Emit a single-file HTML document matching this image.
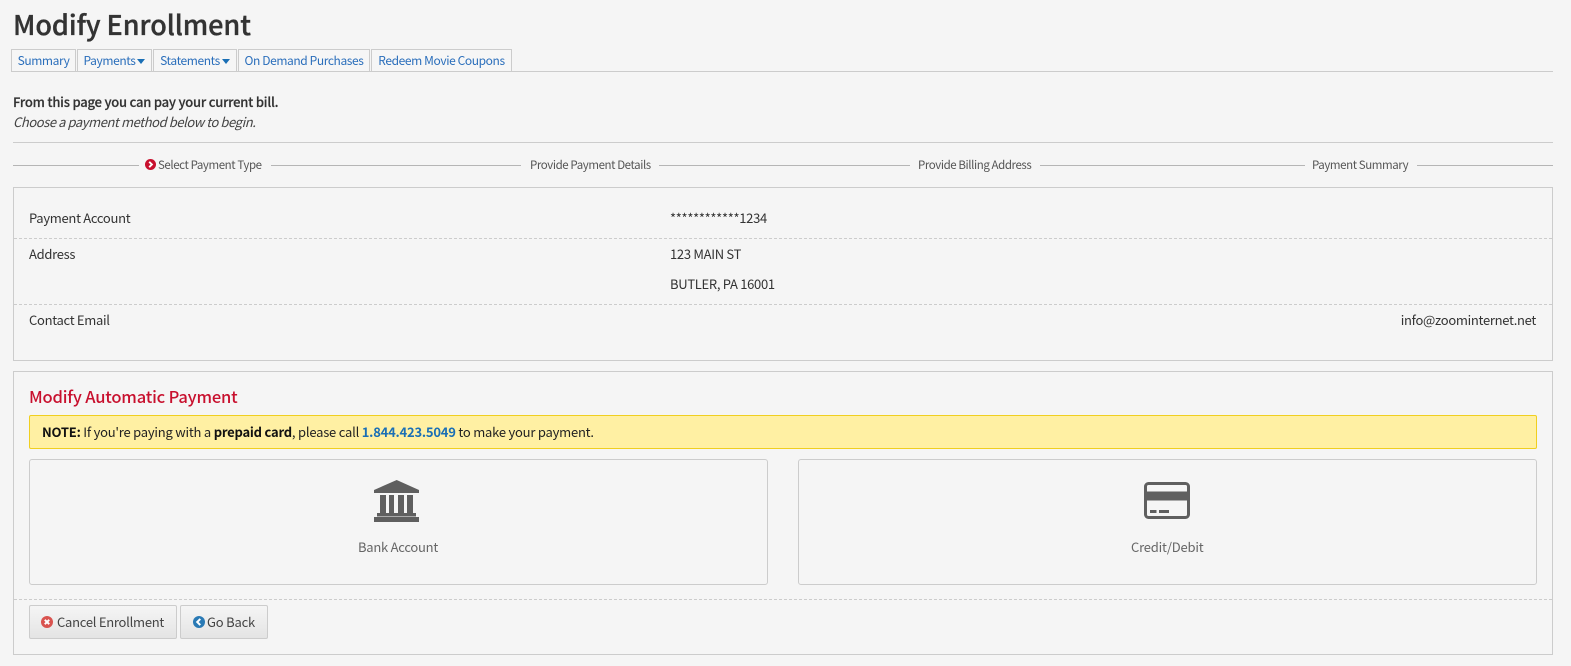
<!DOCTYPE html>
<html>
<head>
<meta charset="utf-8">
<style>
html,body{margin:0;padding:0;background:#f5f5f5;}
body{width:1571px;height:666px;position:relative;overflow:hidden;font-family:"Noto Sans CJK SC","Noto Sans CJK JP","Liberation Sans",sans-serif;color:#333;font-size:13px;letter-spacing:-.3px;}
.t{position:absolute;white-space:nowrap;line-height:20px;}
.b{position:absolute;box-sizing:border-box;}
.tab{position:absolute;top:49px;height:23px;box-sizing:border-box;border:1px solid #ccc;border-bottom:0;background:#f6f6f6;color:#2a6ebb;font-size:12px;letter-spacing:-.4px;line-height:22px;text-align:center;white-space:nowrap;}
.caret{display:inline-block;width:0;height:0;border-left:4.5px solid transparent;border-right:4.5px solid transparent;border-top:5px solid #1a6fb5;vertical-align:1px;margin-left:2px;}
.ln{position:absolute;height:1px;background:#b5b5b5;top:165px;}
.step{position:absolute;top:155px;font-size:11.5px;letter-spacing:-.42px;line-height:20px;color:#555;white-space:nowrap;}
.btn{position:absolute;top:605px;height:34px;box-sizing:border-box;border:1px solid #ccc;border-radius:2px;background:linear-gradient(#f5f5f5,#e4e4e4);color:#444;font-size:13px;letter-spacing:-.26px;line-height:32px;white-space:nowrap;}
.dash{position:absolute;height:0;border-top:1px dashed #ccc;}
.card{position:absolute;top:459px;height:126px;box-sizing:border-box;border:1px solid #ccc;border-radius:3px;}
</style>
</head>
<body>
<div class="t" style="left:13px;top:6px;font-size:27px;letter-spacing:-.05px;line-height:36px;font-weight:500;color:#333;-webkit-text-stroke:.35px #333;">Modify Enrollment</div>

<div class="tab" style="left:11px;width:65px;">Summary</div>
<div class="tab" style="left:77px;width:75px;">Payments<span class="caret"></span></div>
<div class="tab" style="left:153px;width:84px;">Statements<span class="caret"></span></div>
<div class="tab" style="left:238px;width:132px;">On Demand Purchases</div>
<div class="tab" style="left:371px;width:141px;">Redeem Movie Coupons</div>
<div class="b" style="left:11px;top:71px;width:1542px;height:1px;background:#ccc;"></div>

<div class="t" style="left:13px;top:92px;font-size:13px;letter-spacing:-.21px;font-weight:500;-webkit-text-stroke:.2px #333;">From this page you can pay your current bill.</div>
<div class="t" style="left:13px;top:112px;font-size:13px;letter-spacing:-.43px;font-style:italic;color:#444;">Choose a payment method below to begin.</div>
<div class="b" style="left:13px;top:142px;width:1540px;height:1px;background:#ccc;"></div>

<div class="ln" style="left:13px;width:126px;"></div>
<svg style="position:absolute;left:145px;top:159px" width="11" height="11" viewBox="0 0 11 11"><circle cx="5.5" cy="5.5" r="5.5" fill="#c8102e"/><path d="M4.2 2.8 L6.9 5.5 L4.2 8.2" fill="none" stroke="#fff" stroke-width="1.9"/></svg>
<div class="step" style="left:158px;">Select Payment Type</div>
<div class="ln" style="left:271px;width:250px;"></div>
<div class="step" style="left:530px;">Provide Payment Details</div>
<div class="ln" style="left:659px;width:251px;"></div>
<div class="step" style="left:918px;">Provide Billing Address</div>
<div class="ln" style="left:1040px;width:265px;"></div>
<div class="step" style="left:1312px;">Payment Summary</div>
<div class="ln" style="left:1417px;width:136px;"></div>

<div class="b" style="left:13px;top:187px;width:1540px;height:174px;border:1px solid #ccc;"></div>
<div class="t" style="left:29px;top:208px;">Payment Account</div>
<div class="t" style="left:670px;top:208px;">************1234</div>
<div class="dash" style="left:14px;top:238px;width:1538px;"></div>
<div class="t" style="left:29px;top:244px;">Address</div>
<div class="t" style="left:670px;top:244px;">123 MAIN ST</div>
<div class="t" style="left:670px;top:274px;">BUTLER, PA 16001</div>
<div class="dash" style="left:14px;top:304px;width:1538px;"></div>
<div class="t" style="left:29px;top:310px;">Contact Email</div>
<div class="t" style="right:35px;top:310px;">info@zoominternet.net</div>

<div class="b" style="left:13px;top:371px;width:1540px;height:284px;border:1px solid #ccc;"></div>
<div class="t" style="left:29px;top:386px;font-size:16.5px;letter-spacing:-.17px;font-weight:500;color:#c8102e;">Modify Automatic Payment</div>
<div class="b" style="left:29px;top:415px;width:1508px;height:34px;background:#fff0a3;border:1px solid #f0cf20;border-radius:2px;"></div>
<div class="t" style="left:42px;top:422px;font-size:13px;letter-spacing:-.22px;color:#222;"><b style="color:#111">NOTE:</b> If you're paying with a <b style="color:#111">prepaid card</b>, please call <b style="color:#1a6fb5">1.844.423.5049</b> to make your payment.</div>

<div class="card" style="left:29px;width:739px;"></div>
<svg style="position:absolute;left:373px;top:479px" width="47" height="44" viewBox="0 0 47 44" fill="#5f5f5f">
<path d="M23.7 1 L46 11 V14 H1 V11 Z"/>
<rect x="7" y="16" width="6" height="18"/>
<rect x="16" y="16" width="5" height="18"/>
<rect x="25" y="16" width="6" height="18"/>
<rect x="34" y="16" width="6" height="18"/>
<rect x="4" y="34" width="39" height="3.5"/>
<rect x="1" y="38" width="45" height="5"/>
</svg>
<div class="t" style="left:358px;top:537px;letter-spacing:-.25px;color:#666;">Bank Account</div>

<div class="card" style="left:798px;width:739px;"></div>
<svg style="position:absolute;left:1144px;top:482px" width="46" height="37" viewBox="0 0 46 37">
<rect x="1.5" y="1.5" width="43" height="34" rx="3" fill="none" stroke="#5f5f5f" stroke-width="3"/>
<rect x="2" y="9.5" width="42" height="9" fill="#5f5f5f"/>
<rect x="6" y="28" width="6.5" height="3" fill="#5f5f5f"/>
<rect x="15" y="28" width="10" height="3" fill="#5f5f5f"/>
</svg>
<div class="t" style="left:1131px;top:537px;letter-spacing:-.2px;color:#666;">Credit/Debit</div>

<div class="dash" style="left:14px;top:599px;width:1538px;"></div>
<div class="btn" style="left:29px;width:148px;padding-left:27px;">Cancel Enrollment</div>
<svg style="position:absolute;left:41px;top:616px" width="12" height="12" viewBox="0 0 12 12"><circle cx="6" cy="6" r="6" fill="#d9534f"/><path d="M3.8 3.8 L8.2 8.2 M8.2 3.8 L3.8 8.2" stroke="#fff" stroke-width="2"/></svg>
<div class="btn" style="left:180px;width:88px;padding-left:26px;letter-spacing:-.2px;">Go Back</div>
<svg style="position:absolute;left:193px;top:616px" width="12" height="12" viewBox="0 0 12 12"><circle cx="6" cy="6" r="6" fill="#2a7ab5"/><path d="M7.3 2.9 L4.2 6 L7.3 9.1" fill="none" stroke="#fff" stroke-width="2"/></svg>
</body>
</html>
